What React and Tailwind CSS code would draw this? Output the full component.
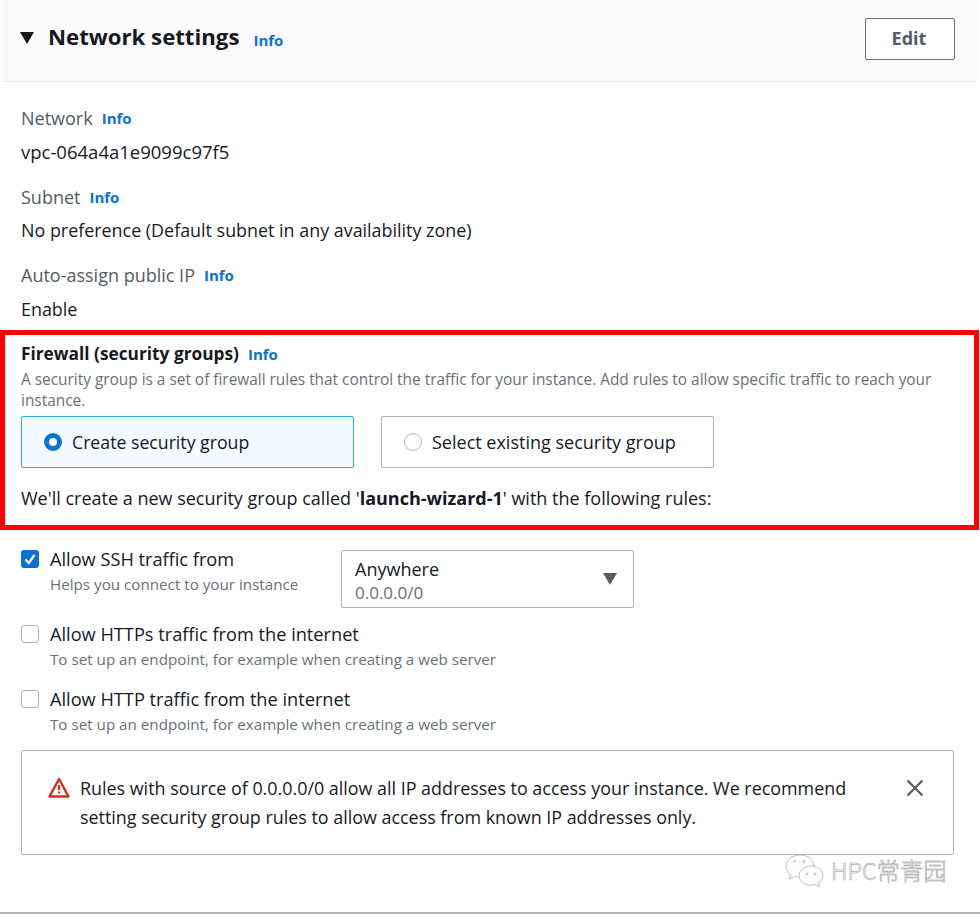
import React from "react";

const font = { fontFamily: '"Open Sans", "Noto Sans", sans-serif' };

const InfoLink = ({ className = "" }) => (
  <a className={`font-bold text-[#0972d3] text-[15px] leading-5 ${className}`}>Info</a>
);

const Field = ({ label, value, valueClass = "text-[17.9px] mt-[9px]", className = "" }) => (
  <div className={className}>
    <div className="flex items-center gap-[9px] h-6">
      <span className="text-[18px] text-[#545b64]">{label}</span>
      <InfoLink />
    </div>
    <div className={`h-6 leading-6 text-[#16191f] ${valueClass}`}>{value}</div>
  </div>
);

const RadioCard = ({ label, selected, labelClass = "text-[18px]" }) => (
  <div
    className={`flex items-center gap-[10px] w-[333px] h-[52px] pl-[22px] rounded-[2px] border ${
      selected ? "border-[#2bb0d6] bg-[#f2fafd]" : "border-[#aab7b8] bg-white"
    }`}
  >
    {selected ? (
      <span className="w-[18px] h-[18px] rounded-full border-[5px] border-[#0972d3] bg-white" />
    ) : (
      <span className="w-[18px] h-[18px] rounded-full border border-[#aab7b8] bg-white" />
    )}
    <span className={`text-[#16191f] ${labelClass}`}>{label}</span>
  </div>
);

const CheckRow = ({ checked, label, hint, className = "" }) => (
  <div className={`flex items-start gap-[11px] ${className}`}>
    {checked ? (
      <span className="mt-[1px] flex items-center justify-center w-[18px] h-[18px] rounded-[3px] bg-[#0972d3]">
        <svg width="14" height="14" viewBox="0 0 14 14" fill="none" stroke="white" strokeWidth="2.2">
          <path d="M2.5 7.5 5.8 11 11.5 3" />
        </svg>
      </span>
    ) : (
      <span className="mt-[1px] w-[18px] h-[18px] rounded-[3px] border border-[#aab7b8] bg-white" />
    )}
    <div>
      <div className="h-5 text-[18.2px] leading-5 text-[#16191f]">{label}</div>
      <div className="mt-[5px] h-5 text-[15.2px] leading-5 text-[#687078]">{hint}</div>
    </div>
  </div>
);

const WeChatMark = () => (
  <svg width="42" height="34" viewBox="0 0 42 34" fill="white" stroke="#b5b5b5" strokeWidth="0.9">
    <path d="M16 1C8 1 2 6 2 12c0 3.500 1.800 6.500 4.700 8.600L5 25l5.500-2.600c1.700.5 3.500.8 5.500.8 7.800 0 14-5 14-11.200S23.800 1 16 1Z" />
    <path d="M27 12c-6.800 0-12 4.300-12 9.600s5.200 9.600 12 9.600c1.400 0 2.800-.2 4-.6l4.300 2.200-1.100-3.800c2.800-1.700 4.800-4.400 4.800-7.400 0-5.300-5.200-9.600-12-9.600Z" />
    <circle cx="10.500" cy="7.500" r="1" />
    <circle cx="20" cy="7.500" r="1" />
    <circle cx="23" cy="20" r="1" />
    <circle cx="31" cy="20" r="1" />
  </svg>
);

export default function App() {
  return (
    <div className="relative w-[980px] h-[915px] bg-white overflow-hidden" style={font}>
      <header className="flex items-center justify-between h-[82px] ml-[2px] mr-[3px] pl-[18px] pr-[22px] bg-[#fafafa] border-b border-[#e9ebed]">
        <div className="flex items-center">
          <svg width="14" height="12" viewBox="0 0 14 12" className="mr-[14px] mb-[4px]">
            <path d="M0 0h14L7 12Z" fill="#16191f" />
          </svg>
          <h2 className="mb-[7px] text-[22.2px] font-bold text-[#16191f]">Network settings</h2>
          <InfoLink className="ml-[14px]" />
        </div>
        <button className="w-[90px] h-[42px] mb-[4px] pr-[2px] rounded-[2px] border border-[#687078] bg-white text-[18px] font-bold text-[#545b64]">
          Edit
        </button>
      </header>

      <div className="pl-[21px] pt-[24px]">
        <Field label="Network" value="vpc-064a4a1e9099c97f5" valueClass="text-[18.5px] mt-[10px]" />
        <Field label="Subnet" value="No preference (Default subnet in any availability zone)" className="mt-[21px]" />
        <Field label="Auto-assign public IP" value="Enable" valueClass="text-[17.9px] mt-[10px]" className="mt-[21px]" />
      </div>

      <section className="mt-[9px] h-[200px] mr-[1px] border-[5px] border-[#fe0000] pl-[16px] pr-[30px] pt-[9px]">
        <div className="flex items-center gap-[9px] h-5">
          <span className="text-[17.3px] font-bold text-[#16191f]">Firewall (security groups)</span>
          <InfoLink />
        </div>
        <p className="mt-[5px] text-[15.4px] leading-[21px] text-[#687078]">
          A security group is a set of firewall rules that control the traffic for your instance. Add rules to allow specific traffic to reach your instance.
        </p>
        <div className="flex gap-[27px] mt-[5px]">
          <RadioCard label="Create security group" selected labelClass="text-[17.7px]" />
          <RadioCard label="Select existing security group" />
        </div>
        <p className="mt-[18px] text-[18px] leading-6 text-[#16191f]">
          We'll create a new security group called '<b>launch-wizard-1</b>' with the following rules:
        </p>
      </section>

      <div className="pl-[21px] pr-[26px] pt-[19px]">
        <div className="flex items-start">
          <CheckRow
            checked
            label="Allow SSH traffic from"
            hint="Helps you connect to your instance"
            className="w-[320px]"
          />
          <div className="flex items-center justify-between w-[293px] h-[58px] mt-[1px] pl-[13px] pr-[16px] rounded-[2px] border border-[#aab7b8]">
            <div className="mt-[4px]">
              <div className="text-[18px] leading-[23px] text-[#16191f]">Anywhere</div>
              <div className="text-[17px] leading-[23px] text-[#687078]">0.0.0.0/0</div>
            </div>
            <svg width="14" height="12" viewBox="0 0 14 12">
              <path d="M0 0h14L7 12Z" fill="#545b64" />
            </svg>
          </div>
        </div>
        <CheckRow
          label="Allow HTTPs traffic from the internet"
          hint="To set up an endpoint, for example when creating a web server"
          className="mt-[16px]"
        />
        <CheckRow
          label="Allow HTTP traffic from the internet"
          hint="To set up an endpoint, for example when creating a web server"
          className="mt-[20px]"
        />
        <div className="flex items-start justify-between mt-[16px] h-[105px] pl-[26px] pr-[29px] pt-[23px] rounded-[2px] border border-[#aab7b8]">
          <div className="flex items-start gap-[10px]">
            <svg width="22" height="21" viewBox="0 0 22 21" className="mt-[3px] shrink-0">
              <path d="M11 2 20.500 19.500H1.500Z" fill="#fff" stroke="#d13212" strokeWidth="2.4" strokeLinejoin="round" />
              <path d="M11 8v5M11 14.500v2" stroke="#d13212" strokeWidth="2.200" />
            </svg>
            <p className="w-[790px] text-[17.9px] leading-[29px] text-[#16191f]">
              Rules with source of 0.0.0.0/0 allow all IP addresses to access your instance. We recommend setting security group rules to allow access from known IP addresses only.
            </p>
          </div>
          <svg width="18" height="18" viewBox="0 0 18 18" className="mt-[5px]" fill="none" stroke="#545b64" strokeWidth="2.200">
            <path d="M1.500 1.500 16.500 16.500M16.500 1.500 1.500 16.500" />
          </svg>
        </div>
      </div>

      {/* watermark sits on top of the page */}
      <div className="absolute left-[784px] top-[853px] flex items-center gap-[5px]">
        <WeChatMark />
        <span
          className="text-[23.4px] font-light text-white [-webkit-text-stroke:0.5px_#8f8f8f]"
          style={{ fontFamily: '"Noto Sans CJK SC", "Open Sans", sans-serif' }}
        >
          HPC常青园
        </span>
      </div>

      <div className="absolute left-0 right-0 bottom-0 h-[2px] mb-[1px] bg-[#aeb4b8]" />
    </div>
  );
}
